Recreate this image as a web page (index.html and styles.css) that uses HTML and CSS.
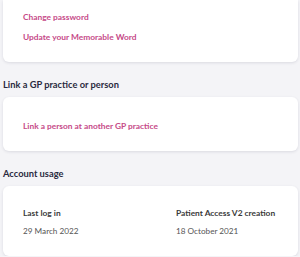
FILE: index.html
```html
<!DOCTYPE html>
<html lang="en">
<head>
  <meta charset="UTF-8" />
  <meta name="viewport" content="width=device-width, initial-scale=1.0"/>
  <title>Account settings</title>
  <link rel="stylesheet" href="styles.css">
</head>
<body>

<div class="card card-top">
  <a href="#" class="link">Change password</a>
  <a href="#" class="link">Update your Memorable Word</a>
</div>

<h2>Link a GP practice or person</h2>
<div class="card card-link">
  <a href="#" class="link">Link a person at another GP practice</a>
</div>

<h2>Account usage</h2>
<div class="card card-usage">
  <div class="usage">
    <div class="usage-label">Last log in</div>
    <div class="usage-value">29 March 2022</div>
  </div>
  <div class="usage">
    <div class="usage-label">Patient Access V2 creation</div>
    <div class="usage-value">18 October 2021</div>
  </div>
</div>

</body>
</html>
```

FILE: styles.css
```css
body {
  margin: 0;
  padding: 0 2px 0 3px;
  font-family: Lato, 'Noto Sans', sans-serif;
  background: #f4f4f7;
  color: #333;
  overflow: hidden;
}

.card {
  background: white;
  border-radius: 6px;
  box-shadow: 0 1px 3px rgba(40,40,70,0.12);
  padding-left: 20px;
}

.card-top {
  border-radius: 0 0 6px 6px;
  padding-top: 7px;
  padding-bottom: 15px;
}

.link {
  display: block;
  color: #c64a88;
  font-size: 8.4px;
  font-weight: 700;
  line-height: 20px;
  text-decoration: none;
}

h2 {
  font-size: 9.3px;
  font-weight: 700;
  color: #2a2a40;
  line-height: 16px;
  margin: 15px 0 4px;
}

.card-link {
  padding-top: 21px;
  padding-bottom: 17px;
}

.card-link .link {
  line-height: 16px;
}

.card-usage {
  display: grid;
  grid-template-columns: 153px 1fr;
  padding-top: 18px;
  padding-bottom: 16px;
}

.usage-label {
  font-size: 8.4px;
  font-weight: 700;
  color: #3a3a3a;
  line-height: 18px;
}

.usage-value {
  font-size: 8.2px;
  color: #555;
  line-height: 18px;
}
```
